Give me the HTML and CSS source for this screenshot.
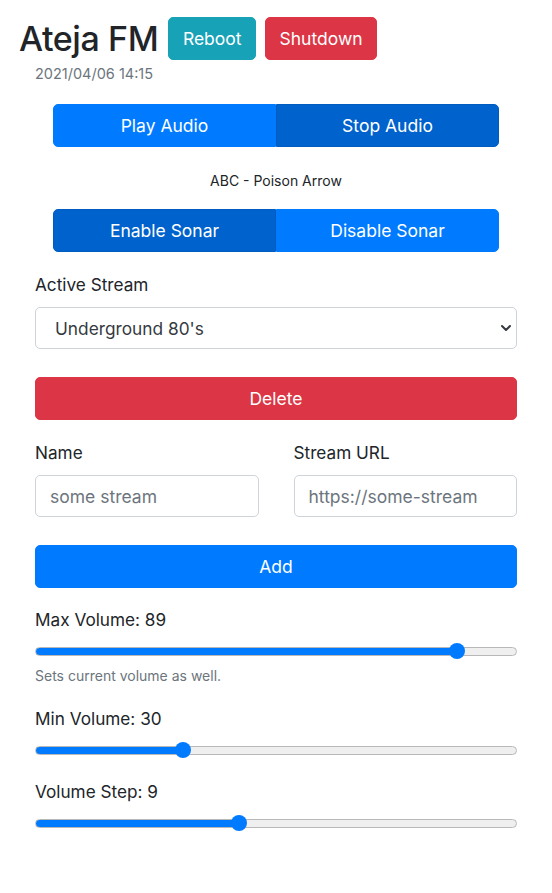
FILE: index.html
```html
<!DOCTYPE html>
<html lang="en">
<head>
<meta charset="utf-8">
<title>Ateja FM</title>
<link rel="stylesheet" href="styles.css">
</head>
<body>
<main class="page">
  <header class="header">
    <div class="title-row">
      <h1 class="title">Ateja FM</h1>
      <button class="btn btn-info btn-top">Reboot</button>
      <button class="btn btn-danger btn-top">Shutdown</button>
    </div>
    <div class="date">2021/04/06 14:15</div>
  </header>

  <div class="btn-group group-first">
    <button class="btn btn-primary">Play Audio</button>
    <button class="btn btn-primary active">Stop Audio</button>
  </div>

  <div class="now-playing">ABC - Poison Arrow</div>

  <div class="btn-group group-second">
    <button class="btn btn-primary active">Enable Sonar</button>
    <button class="btn btn-primary">Disable Sonar</button>
  </div>

  <label class="label label-stream">Active Stream</label>
  <div class="select-wrap">
    <select class="control select">
      <option>Underground 80's</option>
    </select>
    <svg class="chevron" width="12" height="8" viewBox="0 0 12 8"><path d="M2 2 L6 6 L10 2" fill="none" stroke="#343a40" stroke-width="2" stroke-linecap="round" stroke-linejoin="round"/></svg>
  </div>

  <button class="btn btn-danger btn-block btn-delete">Delete</button>

  <div class="fields">
    <div class="field">
      <label class="label">Name</label>
      <input class="control input" placeholder="some stream">
    </div>
    <div class="field">
      <label class="label">Stream URL</label>
      <input class="control input" placeholder="https://some-stream">
    </div>
  </div>

  <button class="btn btn-primary btn-block btn-add">Add</button>

  <label class="label label-vol">Max Volume: 89</label>
  <input type="range" class="range" min="0" max="100" value="89" style="--fill: 87.7%">
  <div class="help">Sets current volume as well.</div>

  <label class="label label-vol2">Min Volume: 30</label>
  <input type="range" class="range" min="0" max="100" value="30" style="--fill: 30.6%">

  <label class="label label-vol2">Volume Step: 9</label>
  <input type="range" class="range" min="1" max="20" value="9" style="--fill: 42.4%">
</main>
</body>
</html>
```

FILE: styles.css
```css
* { box-sizing: border-box; }

body {
  margin: 0;
  background: #fff;
  color: #212529;
  font-family: Inter, "Liberation Sans", Arial, sans-serif;
  font-size: 17.2px;
}

.page {
  padding: 17px 35px 40px;
  display: flex;
  flex-direction: column;
}

.header {
  display: flex;
  flex-direction: column;
}

.title-row {
  display: flex;
  align-items: center;
  gap: 9px;
  margin-left: -16px;
}

.title {
  margin: 0 1px 0 0;
  font-size: 34px;
  font-weight: 500;
  line-height: 43px;
  letter-spacing: -0.4px;
}

.date {
  margin-top: 4px;
  font-size: 14.5px;
  line-height: 20px;
  color: #6c757d;
}

.btn {
  font-family: inherit;
  font-size: 17.5px;
  height: 43px;
  padding: 0 15px;
  border: 1px solid transparent;
  border-radius: 5px;
  color: #fff;
  cursor: pointer;
  line-height: 1;
}

.btn-top { padding: 0 13.5px; }

.btn-info { background: #17a2b8; border-color: #17a2b8; }
.btn-danger { background: #dc3545; border-color: #dc3545; }
.btn-primary { background: #007bff; border-color: #007bff; }
.btn-primary.active { background: #0062cc; border-color: #005cbf; }

.btn-group {
  display: flex;
  margin: 0 18px;
}
.btn-group .btn { flex: 1; }
.btn-group .btn:first-child { border-top-right-radius: 0; border-bottom-right-radius: 0; }
.btn-group .btn:last-child { border-top-left-radius: 0; border-bottom-left-radius: 0; }

.group-first { margin-top: 20px; }
.group-second { margin-top: 18px; }

.now-playing {
  margin-top: 24px;
  text-align: center;
  font-size: 14px;
  line-height: 20px;
}

.label {
  display: block;
  line-height: 24px;
}

.label-stream { margin-top: 21px; }

.control {
  display: block;
  width: 100%;
  height: 42px;
  border: 1px solid #ced4da;
  border-radius: 5px;
  background: #fff;
  color: #343a40;
  font-family: inherit;
  font-size: 17.3px;
  margin-top: 10px;
}

.select-wrap {
  position: relative;
}

.select {
  appearance: none;
  -webkit-appearance: none;
  padding: 0 19px;
}

.chevron {
  position: absolute;
  right: 5px;
  top: 27px;
}

.btn-block { width: 100%; }
.btn-delete { margin-top: 28px; }
.btn-add { margin-top: 28px; }

.fields {
  margin-top: 21px;
  display: grid;
  grid-template-columns: 1fr 1fr;
  column-gap: 35px;
}

.input {
  padding: 0 14px;
  font-size: 17.5px;
}
.input::placeholder { color: #6c757d; opacity: 1; }

.label-vol { margin-top: 20px; }
.label-vol2 { margin-top: 22px; }

.range {
  -webkit-appearance: none;
  appearance: none;
  display: block;
  width: 482px;
  height: 16px;
  margin: 11px 0 0 0;
  background: transparent;
}

.range::-webkit-slider-runnable-track {
  height: 9px;
  border-radius: 5px;
  border: 1px solid #b8b8b8;
  background: linear-gradient(to right, #007bff 0, #007bff var(--fill), #efefef var(--fill), #efefef 100%);
}

.range::-webkit-slider-thumb {
  -webkit-appearance: none;
  appearance: none;
  width: 16px;
  height: 16px;
  border-radius: 50%;
  background: #007bff;
  border: none;
  margin-top: -4.5px;
}

.help {
  margin-top: 8px;
  font-size: 14px;
  line-height: 18px;
  color: #6c757d;
}
```
